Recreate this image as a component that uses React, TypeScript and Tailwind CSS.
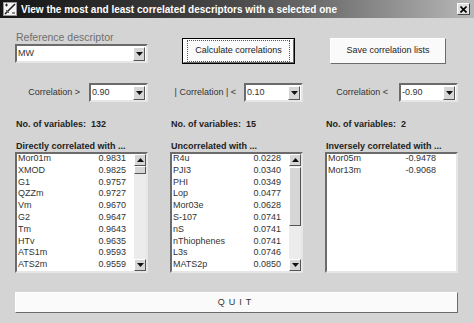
import React from 'react'

const direct: [string, string][] = [
  ['Mor01m', '0.9831'],
  ['XMOD', '0.9825'],
  ['G1', '0.9757'],
  ['QZZm', '0.9727'],
  ['Vm', '0.9670'],
  ['G2', '0.9647'],
  ['Tm', '0.9643'],
  ['HTv', '0.9635'],
  ['ATS1m', '0.9593'],
  ['ATS2m', '0.9559'],
]

const uncorrelated: [string, string][] = [
  ['R4u', '0.0228'],
  ['PJI3', '0.0340'],
  ['PHI', '0.0349'],
  ['Lop', '0.0477'],
  ['Mor03e', '0.0628'],
  ['S-107', '0.0741'],
  ['nS', '0.0741'],
  ['nThiophenes', '0.0741'],
  ['L3s', '0.0746'],
  ['MATS2p', '0.0850'],
]

const inverse: [string, string][] = [
  ['Mor05m', '-0.9478'],
  ['Mor13m', '-0.9068'],
]

function Arrow({ up }: { up?: boolean }) {
  return (
    <svg width="7" height="4" viewBox="0 0 7 4">
      <path d={up ? 'M0 4 L3.5 0 L7 4 Z' : 'M0 0 L7 0 L3.5 4 Z'} fill="#111" />
    </svg>
  )
}

function ArrowButton({ up }: { up?: boolean }) {
  return (
    <div className="w-[12px] h-[12px] bg-[#d6d6d6] border border-t-white border-l-white border-r-[#555] border-b-[#555] flex items-center justify-center shrink-0">
      <Arrow up={up} />
    </div>
  )
}

function Combo({ value, width }: { value: string; width: string }) {
  return (
    <div className={`${width} h-[19px] bg-white border-2 border-t-[#6b6b6b] border-l-[#6b6b6b] border-r-[#e6e6e6] border-b-[#e6e6e6] flex items-center`}>
      <span className="flex-1 pl-[1px] text-[9px] text-[#333]">{value}</span>
      <div className="w-[12px] h-[14px] mr-[1px] bg-[#d6d6d6] border border-t-white border-l-white border-r-[#555] border-b-[#555] flex items-center justify-center">
        <Arrow />
      </div>
    </div>
  )
}

function ListBox({
  rows,
  thumbTop,
  thumbHeight,
  scroll,
}: {
  rows: [string, string][]
  thumbTop?: number
  thumbHeight?: number
  scroll?: boolean
}) {
  return (
    <div className="h-[121px] bg-white border-2 border-t-[#6b6b6b] border-l-[#6b6b6b] border-r-[#e6e6e6] border-b-[#e6e6e6] flex">
      <div className="flex-1 overflow-hidden">
        <div className="-mt-px">
          {rows.map(([name, value]) => (
            <div key={name} className="w-[109px] h-[11.8px] pl-px flex justify-between items-center text-[9px] text-[#333] leading-[11.8px]">
              <span>{name}</span>
              <span>{value}</span>
            </div>
          ))}
        </div>
      </div>
      {scroll && (
        <div className="w-[12px] flex flex-col bg-[#ececec]">
          <ArrowButton up />
          <div className="flex-1 relative">
            <div
              className="absolute left-0 right-0 bg-[#d6d6d6] border border-t-white border-l-white border-r-[#555] border-b-[#555]"
              style={{ top: thumbTop, height: thumbHeight }}
            />
          </div>
          <ArrowButton />
        </div>
      )}
    </div>
  )
}

function RaisedButton({ children, className, focused }: { children: React.ReactNode; className: string; focused?: boolean }) {
  return (
    <div className={`${className} ${focused ? 'border border-black' : ''}`}>
      <div className="w-full h-full bg-[#fafafa] border border-t-white border-l-white border-r-[#6b6b6b] border-b-[#6b6b6b] flex items-center justify-center">
        <div className={`w-full h-full flex items-center justify-center ${focused ? 'm-[3px] border border-dotted border-[#555]' : ''}`}>
          {children}
        </div>
      </div>
    </div>
  )
}

export default function App() {
  return (
    <div className="w-[474px] h-[323px] bg-[#d4d4d4] flex flex-col overflow-hidden font-['Liberation_Sans',Arial,sans-serif]">
      {/* タイトルバー */}
      <div className="h-[18px] bg-gradient-to-r from-[#151515] via-[#4a4a4a] to-[#b8b8b8] flex items-center pl-[3px] pr-[4px]">
        <svg width="14" height="14" viewBox="0 0 14 14" className="shrink-0">
          <rect x="0.5" y="0.5" width="13" height="13" fill="#f4f4f4" stroke="#999" />
          <path d="M2 12 L12 2" stroke="#222" strokeWidth="1.6" />
          <path d="M2 3 L5 3 M3.5 1.5 L3.5 4.5" stroke="#222" strokeWidth="1" />
          <path d="M9 11 L12 11" stroke="#222" strokeWidth="1" />
          <path d="M3 8 L6 11" stroke="#555" strokeWidth="1" />
        </svg>
        <span className="ml-[4px] flex-1 text-white font-bold text-[10px] whitespace-nowrap">
          View the most and least correlated descriptors with a selected one
        </span>
        <div className="w-[13px] h-[12px] bg-[#e0e0e0] border border-t-white border-l-white border-r-[#444] border-b-[#444] flex items-center justify-center">
          <svg width="7" height="7" viewBox="0 0 7 7">
            <path d="M0.5 0.5 L6.5 6.5 M6.5 0.5 L0.5 6.5" stroke="#000" strokeWidth="1.6" />
          </svg>
        </div>
      </div>

      <div className="flex-1 px-[15px] pt-[13px]">
        {/* 1行目 */}
        <div className="flex items-start">
          <div className="w-[133px]">
            <div className="h-[12px] leading-[12px] mb-px pl-px text-[10.5px] text-[#6f6f6f]">Reference descriptor</div>
            <Combo value="MW" width="w-[133px]" />
          </div>
          <RaisedButton className="ml-[34px] mt-[7px] w-[113px] h-[26px]" focused>
            <span className="text-[9px] text-[#222]">Calculate correlations</span>
          </RaisedButton>
          <RaisedButton className="ml-[35px] mt-[7px] w-[116px] h-[26px]">
            <span className="text-[9px] text-[#222]">Save correlation lists</span>
          </RaisedButton>
        </div>

        {/* しきい値 */}
        <div className="grid grid-cols-[133px_133px_133px] gap-x-[22px] mt-[19px]">
          <div className="flex items-center justify-end gap-[9px]">
            <span className="text-[9px] text-[#333]">Correlation &gt;</span>
            <Combo value="0.90" width="w-[59px]" />
          </div>
          <div className="flex items-center justify-end gap-[8px]">
            <span className="text-[9px] text-[#333]">| Correlation | &lt;</span>
            <Combo value="0.10" width="w-[59px]" />
          </div>
          <div className="flex items-center justify-end gap-[11px]">
            <span className="text-[9px] text-[#333]">Correlation &lt;</span>
            <Combo value="-0.90" width="w-[59px]" />
          </div>
        </div>

        {/* リスト */}
        <div className="grid grid-cols-[133px_133px_133px] gap-x-[22px] mt-[16px]">
          <div>
            <div className="h-[12px] leading-[12px] pl-px text-[9px] font-bold text-[#222]">No. of variables:&nbsp; 132</div>
            <div className="h-[12px] leading-[12px] mt-[10px] pl-px text-[9px] font-bold text-[#222]">Directly correlated with ...</div>
            <ListBox rows={direct} scroll thumbTop={0} thumbHeight={8} />
          </div>
          <div>
            <div className="h-[12px] leading-[12px] pl-px text-[9px] font-bold text-[#222]">No. of variables:&nbsp; 15</div>
            <div className="h-[12px] leading-[12px] mt-[10px] pl-px text-[9px] font-bold text-[#222]">Uncorrelated with ...</div>
            <ListBox rows={uncorrelated} scroll thumbTop={1} thumbHeight={59} />
          </div>
          <div>
            <div className="h-[12px] leading-[12px] pl-px text-[9px] font-bold text-[#222]">No. of variables:&nbsp; 2</div>
            <div className="h-[12px] leading-[12px] mt-[10px] pl-px text-[9px] font-bold text-[#222]">Inversely correlated with ...</div>
            <ListBox rows={inverse} />
          </div>
        </div>

        {/* 終了ボタン */}
        <RaisedButton className="mt-[19px] w-[443px] h-[21px]">
          <span className="text-[9px] text-[#333] tracking-[4px]">QUIT</span>
        </RaisedButton>
      </div>
    </div>
  )
}
